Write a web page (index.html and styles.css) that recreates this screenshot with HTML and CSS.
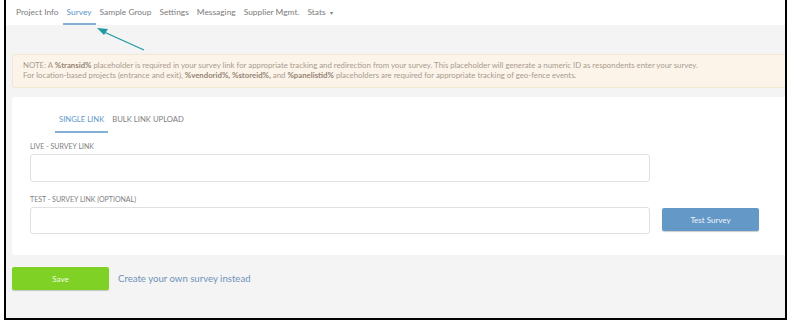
FILE: index.html
```html
<!DOCTYPE html>
<html>
<head>
<meta charset="utf-8">
<link rel="stylesheet" href="styles.css">
</head>
<body>
<div class="frame">
  <nav class="nav">
    <span class="nav-item">Project Info</span>
    <span class="nav-item active">Survey</span>
    <span class="nav-item">Sample Group</span>
    <span class="nav-item">Settings</span>
    <span class="nav-item">Messaging</span>
    <span class="nav-item">Supplier Mgmt.</span>
    <span class="nav-item">Stats <span class="caret">&#9662;</span></span>
  </nav>
  <svg class="pointer" width="60" height="30" viewBox="0 0 60 30">
    <line x1="50" y1="25" x2="10" y2="7" stroke="#1f9aa3" stroke-width="1.3"/>
    <polygon points="3,3 14,4 10,10" fill="#1f9aa3"/>
  </svg>
  <main class="main">
    <div class="note">
      <p>NOTE: A <b>%transid%</b> placeholder is required in your survey link for appropriate tracking and redirection from your survey. This placeholder will generate a numeric ID as respondents enter your survey.</p>
      <p>For location-based projects (entrance and exit), <b>%vendorid%, %storeid%,</b> and <b>%panelistid%</b> placeholders are required for appropriate tracking of geo-fence events.</p>
    </div>
    <section class="card">
      <div class="tabs">
        <span class="tab active">SINGLE LINK</span>
        <span class="tab">BULK LINK UPLOAD</span>
      </div>
      <label class="label first">LIVE - SURVEY LINK</label>
      <div class="row first">
        <div class="input"></div>
      </div>
      <label class="label">TEST - SURVEY LINK (OPTIONAL)</label>
      <div class="row">
        <div class="input short"></div>
        <button class="btn-test">Test Survey</button>
      </div>
    </section>
    <div class="actions">
      <button class="btn-save">Save</button>
      <span class="link">Create your own survey instead</span>
    </div>
  </main>
</div>
</body>
</html>
```
FILE: styles.css
```css
html, body {
  margin: 0;
  padding: 0;
  background: #ffffff;
}
body {
  font-family: "Lato", "Liberation Sans", sans-serif;
}
.frame {
  position: relative;
  margin-left: 4px;
  width: 779px;
  height: 318px;
  border-left: 2px solid #000;
  border-right: 2px solid #000;
  border-bottom: 2px solid #000;
  display: flex;
  flex-direction: column;
}
.nav {
  height: 25px;
  background: #fff;
  display: flex;
  align-items: stretch;
  padding-left: 6px;
}
.nav-item {
  padding: 2px 4px 1px;
  font-size: 8.4px;
  color: #7d7d7d;
  display: flex;
  align-items: center;
  box-sizing: border-box;
  border-bottom: 2px solid transparent;
}
.nav-item.active {
  color: #5b96cb;
  border-bottom-color: #86afd6;
}
.caret {
  font-size: 6px;
  margin-left: 4px;
}
.pointer {
  position: absolute;
  left: 88px;
  top: 25px;
}
.main {
  flex: 1;
  background: #f4f4f4;
  padding: 29px 0 0 6px;
}
.note {
  background: #fcf4e9;
  border: 1px solid #f3e6d3;
  border-right: none;
  border-radius: 3px 0 0 3px;
  padding: 6px 0 6px 10px;
  font-size: 7.8px;
  line-height: 9.5px;
  color: #a99b8e;
  height: 20px;
}
.note p {
  margin: 0;
}
.note b {
  color: #948474;
}
.card {
  margin-top: 9px;
  background: #fff;
  padding: 14px 0 21px 18px;
  border-radius: 3px 0 0 3px;
  display: flex;
  flex-direction: column;
}
.tabs {
  display: flex;
  margin-left: 25px;
}
.tab {
  font-size: 7.7px;
  color: #808080;
  padding: 3px 4px 7px 4px;
  border-bottom: 2px solid transparent;
}
.tab.active {
  color: #5f97ca;
  border-bottom-color: #86afd6;
}
.label {
  font-size: 7px;
  color: #808080;
  margin-top: 8px;
  margin-bottom: 4px;
}
.label.first {
  margin-top: 9px;
}
.row.first {
  margin-bottom: 5px;
}
.row {
  display: flex;
  align-items: flex-start;
  gap: 12px;
}
.input {
  box-sizing: border-box;
  width: 620px;
  height: 28px;
  border: 1px solid #e0e0e0;
  border-radius: 3px;
  background: #fff;
}
.input.short {
  height: 27px;
}
.btn-test {
  margin-top: 1px;
  width: 97px;
  height: 23px;
  border: none;
  border-radius: 2px;
  background: #6398c7;
  color: #eef4fa;
  font-family: "Lato", "Liberation Sans", sans-serif;
  font-size: 8px;
  box-shadow: 0 1px 1px rgba(0,0,0,0.2);
}
.actions {
  margin-top: 12px;
  display: flex;
  align-items: center;
  gap: 9px;
  height: 23px;
}
.btn-save {
  width: 97px;
  height: 23px;
  border: none;
  border-radius: 2px;
  background: #7fd225;
  color: #f4fbe9;
  font-family: "Lato", "Liberation Sans", sans-serif;
  font-size: 8px;
  box-shadow: 0 1px 1px rgba(0,0,0,0.2);
}
.link {
  font-size: 9.6px;
  color: #7193bb;
}
```
